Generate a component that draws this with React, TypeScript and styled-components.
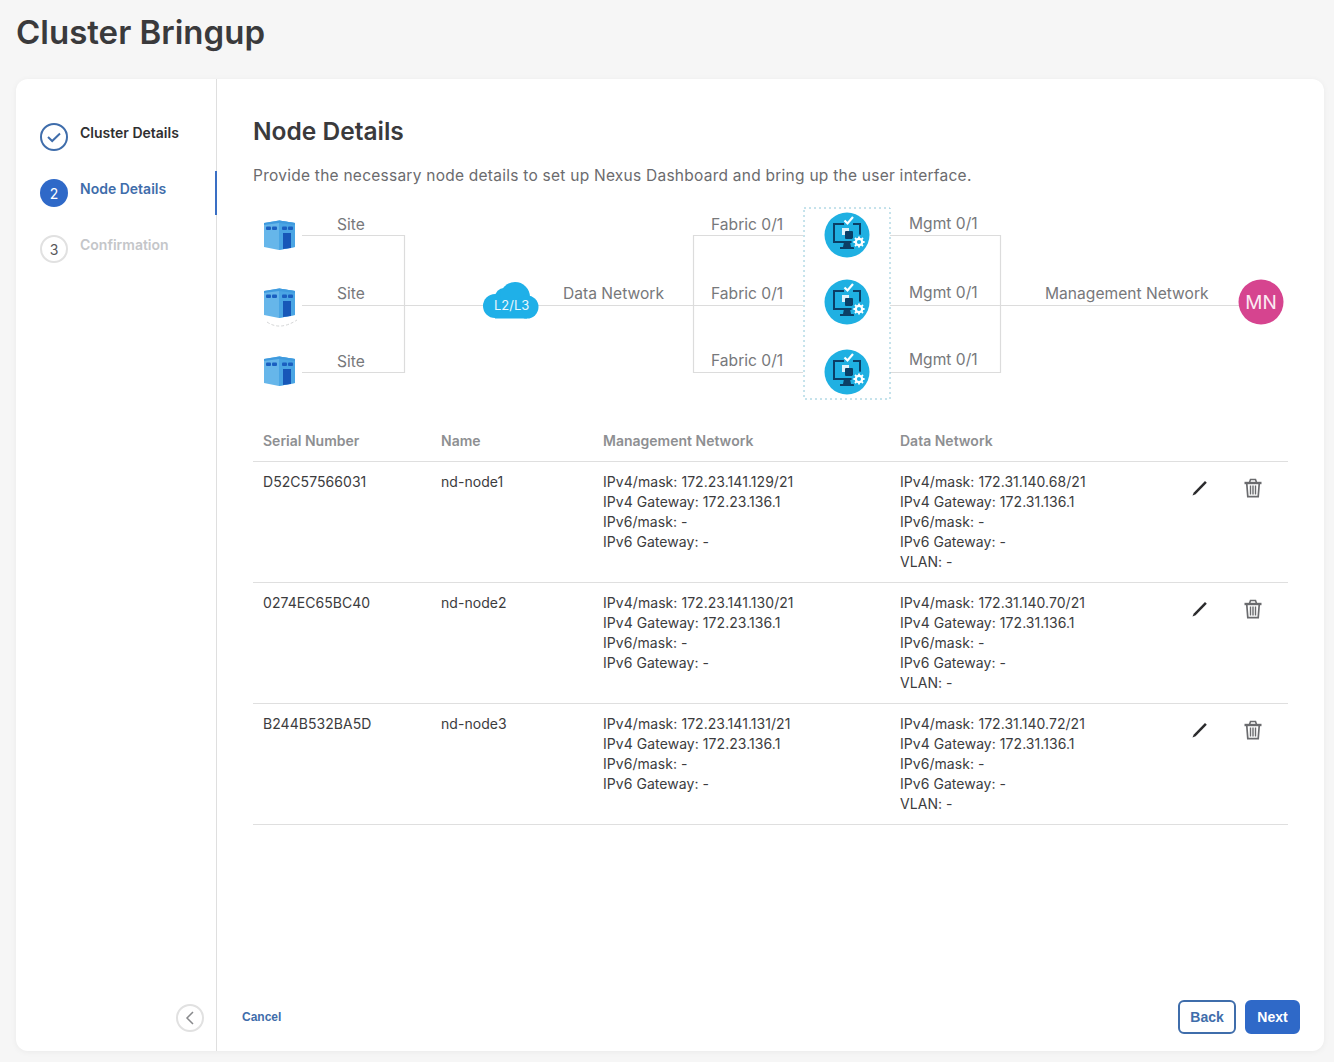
import styled, { createGlobalStyle } from "styled-components";

const GlobalStyle = createGlobalStyle`
  html, body {
    margin: 0;
    padding: 0;
    background: #f6f6f6;
    font-family: Inter, "Liberation Sans", sans-serif;
    color: #39393b;
  }
  * { box-sizing: border-box; }
`;

const Page = styled.div`
  width: 1334px;
  height: 1062px;
  padding: 0 10px 11px 16px;
  display: flex;
  flex-direction: column;
  overflow: hidden;
`;

const PageTitle = styled.h1`
  margin: 0;
  height: 79px;
  padding-top: 12px;
  font-size: 33px;
  line-height: 40px;
  font-weight: 600;
  color: #3a3a3c;
`;

const Card = styled.div`
  flex: 1;
  display: flex;
  background: #fff;
  border-radius: 12px;
  box-shadow: 0 1px 6px rgba(0, 0, 0, 0.05);
  min-height: 0;
`;

const Sidebar = styled.aside`
  width: 201px;
  flex: none;
  border-right: 1px solid #dfdfdf;
  padding-top: 44px;
  display: flex;
  flex-direction: column;
  position: relative;
`;

const Step = styled.div<{ $active?: boolean }>`
  height: 56px;
  padding-left: 24px;
  display: flex;
  gap: 12px;
  position: relative;

  &::after {
    content: "";
    display: ${(p) => (p.$active ? "block" : "none")};
    position: absolute;
    right: -1px;
    top: -8px;
    width: 2px;
    height: 44px;
    background: #3a6fc4;
  }
`;

const StepCircle = styled.div<{ $state: "done" | "active" | "todo" }>`
  width: 28px;
  height: 28px;
  border-radius: 50%;
  display: flex;
  align-items: center;
  justify-content: center;
  font-size: 14px;
  flex: none;
  background: ${(p) => (p.$state === "active" ? "#2f69c8" : "#fff")};
  color: ${(p) => (p.$state === "active" ? "#fff" : "#58585b")};
  border: ${(p) =>
    p.$state === "done"
      ? "2px solid #3f6dab"
      : p.$state === "todo"
        ? "2px solid #e1e1e1"
        : "none"};
`;

const StepLabel = styled.div<{ $state: "done" | "active" | "todo" }>`
  font-size: 14px;
  line-height: 20px;
  font-weight: 600;
  color: ${(p) =>
    p.$state === "done" ? "#2f2f31" : p.$state === "active" ? "#3f6dab" : "#c4c6c9"};
`;

const CollapseButton = styled.button`
  margin-top: auto;
  margin-bottom: 19px;
  margin-left: 160px;
  width: 28px;
  height: 28px;
  border-radius: 50%;
  border: 2px solid #e1e1e1;
  background: #fff;
  display: flex;
  align-items: center;
  justify-content: center;
  padding: 0;
`;

const Main = styled.main`
  flex: 1;
  min-width: 0;
  display: flex;
  flex-direction: column;
  padding: 35px 36px 17px 36px;
`;

const Heading = styled.h2`
  margin: 0;
  font-size: 24.5px;
  line-height: 34px;
  font-weight: 600;
  color: #3a3a3c;
`;

const Description = styled.p`
  margin: 16px 0 0;
  font-size: 15.5px;
  line-height: 24px;
  color: #6b6b6e;
  letter-spacing: 0.25px;
`;

const Diagram = styled.svg`
  display: block;
  margin-top: 17px;
  width: 1040px;
  height: 200px;
  flex: none;
  overflow: visible;
`;

const Table = styled.table`
  width: 1035px;
  margin-top: 21px;
  border-collapse: collapse;
  table-layout: fixed;
`;

const HeadCell = styled.th`
  height: 35px;
  padding: 0 10px 5px;
  text-align: left;
  font-size: 14px;
  font-weight: 600;
  color: #8e8f92;
  border-bottom: 1px solid #dfdfdf;
`;

const Row = styled.tr`
  height: 121px;
  border-bottom: 1px solid #dfdfdf;
`;

const Cell = styled.td`
  padding: 10px 10px 0;
  vertical-align: top;
  font-size: 14px;
  line-height: 20px;
  letter-spacing: 0.05px;
  color: #3c3c3e;
`;

const ActionCell = styled(Cell)`
  padding-top: 16px;
`;

const Actions = styled.div`
  display: flex;
  align-items: center;
  gap: 34px;
`;

const Footer = styled.footer`
  margin-top: auto;
  margin-left: -11px;
  margin-right: -12px;
  display: flex;
  align-items: center;
  justify-content: space-between;
`;

const CancelLink = styled.a`
  font-family: "Liberation Sans", Arial, sans-serif;
  font-size: 12px;
  font-weight: 700;
  color: #3f6dab;
`;

const FooterButtons = styled.div`
  display: flex;
  gap: 9px;
`;

const Button = styled.button<{ $primary?: boolean }>`
  height: 34px;
  padding: 0;
  width: ${(p) => (p.$primary ? "55px" : "58px")};
  border-radius: 6px;
  font-family: "Liberation Sans", Arial, sans-serif;
  font-size: 14px;
  font-weight: 700;
  border: 2px solid ${(p) => (p.$primary ? "#2f69c8" : "#3f6dab")};
  background: ${(p) => (p.$primary ? "#2f69c8" : "#fff")};
  color: ${(p) => (p.$primary ? "#fff" : "#3f6dab")};
`;

const Label = styled.text`
  font-family: Inter, "Liberation Sans", sans-serif;
  font-size: 15.6px;
  fill: #77787b;
`;

const CloudLabel = styled(Label)`
  font-size: 13px;
  fill: #e8f7fd;
`;

const AvatarLabel = styled(Label)`
  font-size: 19px;
  fill: #fbeaf3;
`;

const Building = ({ cy }: { cy: number }) => (
  <g transform={`translate(264 ${cy - 15})`}>
    <path d="M0 3 L15 0.5 L31 3 L31 27 L15 30 L0 27 Z" fill="#66b6ea" />
    <path d="M15 0.5 L31 3 L31 27 L15 30 Z" fill="#4aa5e4" />
    <path d="M0 3 L15 0.5 L31 3 L31 5 L15 3 L0 5 Z" fill="#3f9ade" />
    <rect x="2" y="6.5" width="5" height="3.5" rx="1" fill="#1b5fc0" />
    <rect x="8" y="6.5" width="5" height="3.5" rx="1" fill="#1b5fc0" />
    <rect x="18" y="6.5" width="5" height="3.5" rx="1" fill="#1b5fc0" />
    <rect x="24" y="6.5" width="5" height="3.5" rx="1" fill="#1b5fc0" />
    <path d="M19 13 H27 V28 L19 29 Z" fill="#1757b8" />
  </g>
);

const NodeIcon = ({ cy }: { cy: number }) => (
  <g transform={`translate(847 ${cy})`}>
    <circle r="22.5" fill="#1fb0e2" />
    <path d="M-3 -11 H-13 V7 H13 V-11 H6" fill="none" stroke="#0b3f66" strokeWidth="2" />
    <path d="M-3 7 H3 L4 12 H7 V14 H-7 V12 H-4 Z" fill="#0b3f66" />
    <path d="M-2.5 -14.5 L0.5 -11.5 L6 -18" fill="none" stroke="#fff" strokeWidth="2.2" />
    <rect x="-5" y="-7" width="7" height="7" fill="#dff3fb" />
    <rect x="-2" y="-4" width="8" height="8" rx="1" fill="#0b3f66" />
    <g transform="translate(12 7)">
      <circle r="7.5" fill="#1fb0e2" />
      <circle r="3.2" fill="none" stroke="#fff" strokeWidth="2.2" />
      <path
        d="M0 -5.6 V-3.6 M0 5.6 V3.6 M-5.6 0 H-3.6 M5.6 0 H3.6 M-4 -4 L-2.6 -2.6 M4 4 L2.6 2.6 M-4 4 L-2.6 2.6 M4 -4 L2.6 -2.6"
        stroke="#fff"
        strokeWidth="1.8"
      />
    </g>
  </g>
);

const Cloud = () => (
  <g fill="#1fb0e8">
    <circle cx="495" cy="306" r="12" />
    <circle cx="504" cy="297" r="9" />
    <circle cx="515" cy="297" r="15" />
    <circle cx="527" cy="307" r="11.5" />
    <rect x="495" y="302" width="32" height="16.5" />
  </g>
);

const PencilIcon = () => (
  <svg width="18" height="18" viewBox="0 0 18 18">
    <path d="M1.5 16.5 L2.8 13.4 L14 2 L15.8 3.8 L4.6 15.2 Z" fill="#2b2b2d" />
  </svg>
);

const TrashIcon = () => (
  <svg width="20" height="20" viewBox="0 0 20 20" fill="none" stroke="#6a6b6e">
    <path d="M1.5 5 H18.5" strokeWidth="2.4" />
    <path d="M6.5 4.5 L7.5 1.5 H12.5 L13.5 4.5" strokeWidth="1.6" />
    <path d="M3.8 6 L4.8 18.6 H15.2 L16.2 6" strokeWidth="1.7" />
    <path d="M7.5 7.5 V16.5 M10 7.5 V16.5 M12.5 7.5 V16.5" strokeWidth="1.4" />
  </svg>
);

const nodes = [
  {
    serial: "D52C57566031",
    name: "nd-node1",
    mgmtIp: "172.23.141.129/21",
    dataIp: "172.31.140.68/21",
  },
  {
    serial: "0274EC65BC40",
    name: "nd-node2",
    mgmtIp: "172.23.141.130/21",
    dataIp: "172.31.140.70/21",
  },
  {
    serial: "B244B532BA5D",
    name: "nd-node3",
    mgmtIp: "172.23.141.131/21",
    dataIp: "172.31.140.72/21",
  },
];

const siteRows = [
  { y: 229, building: 235 },
  { y: 298, building: 303 },
  { y: 366, building: 371 },
];

const linkRows = [
  { fabric: 229, mgmt: 228, node: 235 },
  { fabric: 298, mgmt: 297, node: 302 },
  { fabric: 365, mgmt: 364, node: 372 },
];

export default function App() {
  return (
    <Page>
      <GlobalStyle />
      <PageTitle>Cluster Bringup</PageTitle>
      <Card>
        <Sidebar>
          <Step>
            <StepCircle $state="done">
              <svg width="14" height="11" viewBox="0 0 14 11" fill="none">
                <path d="M1 5 L5.2 9 L13 1.5" stroke="#3f6dab" strokeWidth="2" />
              </svg>
            </StepCircle>
            <StepLabel $state="done">Cluster Details</StepLabel>
          </Step>
          <Step $active>
            <StepCircle $state="active">2</StepCircle>
            <StepLabel $state="active">Node Details</StepLabel>
          </Step>
          <Step>
            <StepCircle $state="todo">3</StepCircle>
            <StepLabel $state="todo">Confirmation</StepLabel>
          </Step>
          <CollapseButton aria-label="Collapse">
            <svg width="10" height="14" viewBox="0 0 10 14" fill="none">
              <path d="M8 1 L2 7 L8 13" stroke="#88898c" strokeWidth="1.5" />
            </svg>
          </CollapseButton>
        </Sidebar>
        <Main>
          <Heading>Node Details</Heading>
          <Description>
            Provide the necessary node details to set up Nexus Dashboard and bring up the user
            interface.
          </Description>
          <Diagram viewBox="253 205 1040 200">
            <g fill="none" stroke="#dcdcdc" strokeWidth="1.2">
              <path d="M302 235.5 H404.5 V372.5 H302" />
              <path d="M302 305.5 H803" />
              <path d="M803 235.5 H693.5 V372.5 H803" />
              <path d="M890 235.5 H1000.5 V372.5 H890" />
              <path d="M890 305.5 H1240" />
            </g>
            <rect
              x="804"
              y="208"
              width="86"
              height="191"
              fill="#fff"
              stroke="#8cc6d8"
              strokeWidth="1"
              strokeDasharray="2 3"
            />
            {siteRows.map((row) => (
              <g key={row.y}>
                <Building cy={row.building} />
                <Label x="337" y={row.y + 1}>
                  Site
                </Label>
              </g>
            ))}
            <path
              d="M267 322 Q280 331 297 320"
              fill="none"
              stroke="#c9cacc"
              strokeWidth="0.8"
              strokeDasharray="3 2"
            />
            <Cloud />
            <CloudLabel x="494" y="310">
              L2/L3
            </CloudLabel>
            <Label x="563" y="299">
              Data Network
            </Label>
            {linkRows.map((row) => (
              <g key={row.node}>
                <Label x="711" y={row.fabric + 1}>
                  Fabric 0/1
                </Label>
                <NodeIcon cy={row.node} />
                <Label x="909" y={row.mgmt + 1}>
                  Mgmt 0/1
                </Label>
              </g>
            ))}
            <Label x="1045" y="299">
              Management Network
            </Label>
            <circle cx="1261" cy="302" r="22.5" fill="#d6448f" />
            <AvatarLabel x="1261" y="309" textAnchor="middle">
              MN
            </AvatarLabel>
          </Diagram>
          <Table>
            <colgroup>
              <col style={{ width: 178 }} />
              <col style={{ width: 162 }} />
              <col style={{ width: 297 }} />
              <col style={{ width: 291 }} />
              <col style={{ width: 107 }} />
            </colgroup>
            <thead>
              <tr>
                <HeadCell>Serial Number</HeadCell>
                <HeadCell>Name</HeadCell>
                <HeadCell>Management Network</HeadCell>
                <HeadCell>Data Network</HeadCell>
                <HeadCell />
              </tr>
            </thead>
            <tbody>
              {nodes.map((node) => (
                <Row key={node.serial}>
                  <Cell>{node.serial}</Cell>
                  <Cell>{node.name}</Cell>
                  <Cell>
                    IPv4/mask: {node.mgmtIp}
                    <br />
                    IPv4 Gateway: 172.23.136.1
                    <br />
                    IPv6/mask: -
                    <br />
                    IPv6 Gateway: -
                  </Cell>
                  <Cell>
                    IPv4/mask: {node.dataIp}
                    <br />
                    IPv4 Gateway: 172.31.136.1
                    <br />
                    IPv6/mask: -
                    <br />
                    IPv6 Gateway: -
                    <br />
                    VLAN: -
                  </Cell>
                  <ActionCell>
                    <Actions>
                      <PencilIcon />
                      <TrashIcon />
                    </Actions>
                  </ActionCell>
                </Row>
              ))}
            </tbody>
          </Table>
          <Footer>
            <CancelLink>Cancel</CancelLink>
            <FooterButtons>
              <Button>Back</Button>
              <Button $primary>Next</Button>
            </FooterButtons>
          </Footer>
        </Main>
      </Card>
    </Page>
  );
}
